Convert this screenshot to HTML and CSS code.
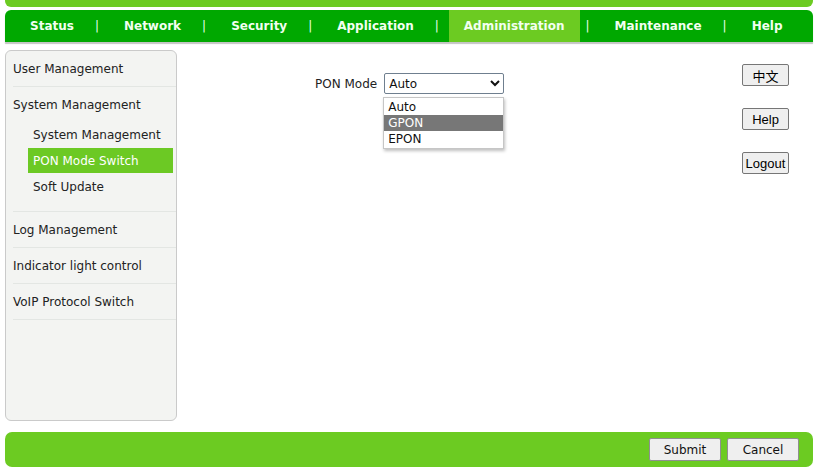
FILE: index.html
```html
<!DOCTYPE html>
<html lang="en">
<head>
    <meta charset="UTF-8">
    <title>Administration - PON Mode Switch</title>
    <link rel="stylesheet" href="styles.css">
</head>
<body>
    <div class="top-bar"></div>

    <div class="nav">
        <span class="nav-item">Status</span>
        <span class="nav-sep">|</span>
        <span class="nav-item">Network</span>
        <span class="nav-sep">|</span>
        <span class="nav-item">Security</span>
        <span class="nav-sep">|</span>
        <span class="nav-item">Application</span>
        <span class="nav-sep">|</span>
        <span class="nav-item active">Administration</span>
        <span class="nav-sep">|</span>
        <span class="nav-item">Maintenance</span>
        <span class="nav-sep">|</span>
        <span class="nav-item">Help</span>
    </div>

    <div class="main">
        <div class="side-menu">
            <div class="menu-group">
                <div class="menu-title">User Management</div>
            </div>
            <div class="menu-group open">
                <div class="menu-title">System Management</div>
                <div class="sub-item">System Management</div>
                <div class="sub-item selected">PON Mode Switch</div>
                <div class="sub-item">Soft Update</div>
            </div>
            <div class="menu-group">
                <div class="menu-title">Log Management</div>
            </div>
            <div class="menu-group">
                <div class="menu-title">Indicator light control</div>
            </div>
            <div class="menu-group">
                <div class="menu-title">VoIP Protocol Switch</div>
            </div>
        </div>

        <div class="content">
            <div class="form-row">
                <label for="pon-mode">PON Mode</label>
                <div class="select-wrap">
                    <select id="pon-mode" class="mode-select">
                        <option>Auto</option>
                        <option>GPON</option>
                        <option>EPON</option>
                    </select>
                    <div class="select-popup">
                        <div class="popup-option">Auto</div>
                        <div class="popup-option hover">GPON</div>
                        <div class="popup-option">EPON</div>
                    </div>
                </div>
            </div>
        </div>

        <div class="side-buttons">
            <button class="small-btn">中文</button>
            <button class="small-btn">Help</button>
            <button class="small-btn">Logout</button>
        </div>
    </div>

    <div class="bottom-bar">
        <button class="form-btn">Submit</button>
        <button class="form-btn">Cancel</button>
    </div>
</body>
</html>
```

FILE: styles.css
```css
* {
    box-sizing: border-box;
}

body {
    margin: 0;
    background: #fff;
    font-family: "DejaVu Sans", Verdana, sans-serif;
    font-size: 12px;
    color: #222;
}

.top-bar {
    height: 7px;
    margin: 0 7px 0 5px;
    background: #6ccb22;
    border-radius: 0 0 6px 6px;
}

.nav {
    display: flex;
    align-items: center;
    height: 32px;
    margin: 3px 7px 0 5px;
    padding-left: 10px;
    background: #00a800;
    border-radius: 6px 6px 0 0;
    box-shadow: 0 2px 1px #c4c4c4;
    color: #f2fff0;
}

.nav-item {
    height: 32px;
    line-height: 32px;
    padding: 0 15px;
    font-weight: bold;
}

.nav-item.active {
    background: #6ccb22;
}

.nav-sep {
    margin: 0 10px 0 6px;
    font-size: 12px;
    color: #e8ffe8;
}

.main {
    display: flex;
    margin: 8px 7px 0 5px;
}

.side-menu {
    width: 172px;
    height: 371px;
    background: #f3f4f2;
    border: 1px solid #cacaca;
    border-radius: 6px;
}

.menu-group {
    margin-left: 7px;
    border-bottom: 1px solid #e3e6e3;
}

.menu-group.open {
    padding-bottom: 11px;
}

.menu-title {
    height: 35px;
    line-height: 36px;
}

.sub-item {
    height: 25px;
    line-height: 26px;
    margin: 0 3px 1px 15px;
    padding-left: 5px;
}

.sub-item.selected {
    background: #6cc924;
    color: #fff;
}

.content {
    flex: 1;
    padding: 23px 0 0 138px;
}

.form-row {
    display: flex;
    align-items: center;
    gap: 7px;
}

.select-wrap {
    position: relative;
}

.mode-select {
    width: 120px;
    height: 21px;
    padding: 0;
    border: 1px solid #6f7f8f;
    border-radius: 2px;
    background: #fff;
    font-family: "DejaVu Sans", Verdana, sans-serif;
    font-size: 12px;
    color: #111;
}

.select-popup {
    position: absolute;
    top: 24px;
    left: -1px;
    width: 121px;
    padding: 1px 0;
    background: #fff;
    border: 1px solid #c6c6c6;
    box-shadow: 1px 2px 3px rgba(0, 0, 0, 0.25);
}

.popup-option {
    height: 16px;
    line-height: 16px;
    padding-left: 4px;
    color: #111;
}

.popup-option.hover {
    background: #777;
    color: #fff;
}

.side-buttons {
    display: flex;
    flex-direction: column;
    gap: 22px;
    padding: 14px 24px 0 0;
}

.small-btn {
    width: 47px;
    height: 22px;
    padding: 0;
    background: #efefef;
    border: 1px solid #767676;
    border-radius: 2px;
    font-family: "Liberation Sans", Arial, "Noto Sans CJK SC", sans-serif;
    font-size: 13px;
    color: #000;
}

.bottom-bar {
    display: flex;
    justify-content: flex-end;
    gap: 6px;
    height: 35px;
    margin: 11px 7px 0 5px;
    padding: 6px 14px 0 0;
    background: #6ccb22;
    border-radius: 7px;
}

.form-btn {
    width: 72px;
    height: 23px;
    padding: 0;
    background: #efefef;
    border: 1px solid #8f8f8f;
    border-radius: 2px;
    font-family: "DejaVu Sans", Verdana, sans-serif;
    font-size: 12px;
    color: #111;
}
```
